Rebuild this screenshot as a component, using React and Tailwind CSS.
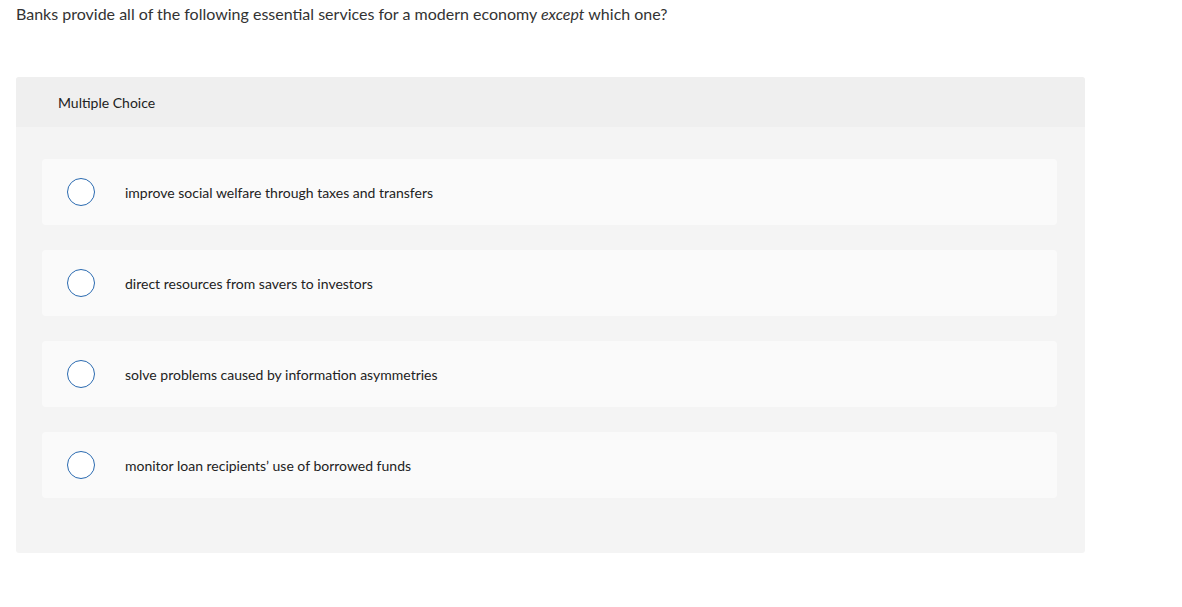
const options = [
  "improve social welfare through taxes and transfers",
  "direct resources from savers to investors",
  "solve problems caused by information asymmetries",
  "monitor loan recipients’ use of borrowed funds",
];

const App = () => {
  return (
    <div
      className="min-h-[607px] bg-white text-[#333] pl-4 pt-[4px]"
      style={{ fontFamily: "Lato, 'Open Sans', sans-serif" }}
    >
      <p className="text-[16px] leading-5">
        Banks provide all of the following essential services for a modern economy{" "}
        <em>except</em> which one?
      </p>
      <div className="mt-[53px] w-[1069px] rounded-[3px] bg-[#f4f4f4] overflow-hidden">
        <div className="h-[50px] bg-[#efefef] pl-[42px] flex items-center text-[14px] text-[#222]">
          Multiple Choice
        </div>
        <div className="flex flex-col gap-[25px] pt-8 pb-[55px] pl-[26px] pr-[28px]">
          {options.map((opt) => (
            <div
              key={opt}
              className="h-[66px] rounded-[4px] bg-[#fafafa] flex items-center pl-[25px]"
            >
              <span className="w-7 h-7 rounded-full border-[1.5px] border-[#2a6ab0] bg-white shrink-0" />
              <span className="ml-[30px] text-[14px] text-[#222]">{opt}</span>
            </div>
          ))}
        </div>
      </div>
    </div>
  );
};

export default App;
